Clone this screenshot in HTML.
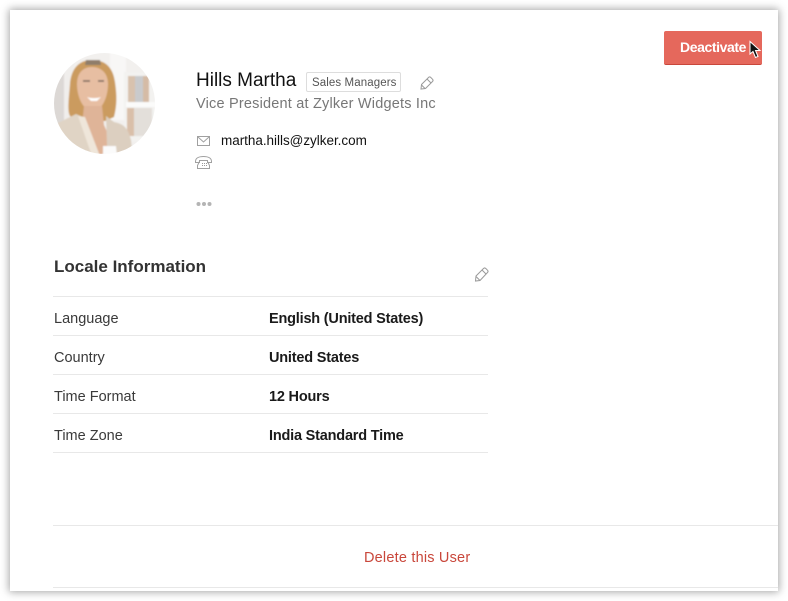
<!DOCTYPE html>
<html><head><meta charset="utf-8"><title>User</title>
<style>
html,body{margin:0;padding:0;background:#fff}
body{width:788px;height:601px;position:relative;overflow:hidden;font-family:"Liberation Sans",sans-serif;color:#111}
.card{position:absolute;left:10px;top:10px;width:768px;height:581px;background:#fff;box-shadow:0 0 8px 1px rgba(0,0,0,.36)}
.t{position:absolute;white-space:nowrap;line-height:20px}
.line{position:absolute;height:1px;background:#e8e8e8}
.lab{font-size:14.5px;color:#3a3a3a;left:54px}
.val{font-size:14.5px;font-weight:bold;color:#1a1a1a;left:269px;letter-spacing:-.2px}
svg{position:absolute;overflow:visible}
</style></head><body>
<div class="card"></div>

<svg style="left:0;top:0" width="788" height="601" viewBox="0 0 788 601">
<defs>
<clipPath id="c"><circle cx="104.500" cy="103.500" r="50.500"/></clipPath>
<filter id="b" x="-10%" y="-10%" width="120%" height="120%"><feGaussianBlur stdDeviation="0.9"/></filter>
</defs>
<g clip-path="url(#c)"><g filter="url(#b)">
<rect x="50" y="50" width="110" height="110" fill="#f2f0ee"/>
<rect x="50" y="50" width="14" height="80" fill="#dcd8d5"/>
<rect x="64" y="50" width="10" height="80" fill="#f0eeec"/>
<rect x="110" y="50" width="16" height="70" fill="#f8f7f6"/>
<rect x="124" y="72" width="32" height="70" fill="#f3f2f0"/>
<rect x="128" y="76" width="7" height="26" fill="#d8c2ae"/>
<rect x="135" y="76" width="8" height="26" fill="#c9cacc"/>
<rect x="143" y="76" width="6" height="26" fill="#d5bba6"/>
<rect x="126" y="102" width="30" height="5" fill="#fbfbfa"/>
<rect x="127" y="108" width="7" height="28" fill="#d9bfa9"/>
<rect x="134" y="108" width="18" height="28" fill="#e3dfda"/>
<path d="M92 60C78 60 71 70 70 84C69 98 67 110 70 116L80 121L105 121L114 117C117 105 117 96 115 82C113 68 106 60 92 60Z" fill="#cb9b5e"/>
<path d="M86 60L100 60L101 65L85 65Z" fill="#8f7d6a"/>
<path d="M92 67C83 67 77 73 77 84C77 97 83 111 93 111C102 111 108 97 108 84C108 73 101 67 92 67Z" fill="#e7bea2"/>
<path d="M84 106L102 106L104 125L113 145L100 156L82 125Z" fill="#dfb498"/>
<path d="M83 81L90 81M98 81L104 81" stroke="#77655a" stroke-width="1.500"/>
<path d="M87 97C91 98.500 97 98.500 101 97L97 101L91 101Z" fill="#fff"/>
<path d="M54 125L76 114L85 118L100 158L60 158Z" fill="#e0d4c5"/>
<path d="M106 116L114 122C124 124 128 128 131 140L133 158L109 158L107 146Z" fill="#dccfc0"/>
<path d="M78 116L85 117L100 156L92 156Z" fill="#efe6da"/>
<path d="M103 146L116 146L117 156L103 156Z" fill="#fbfbfb"/>
</g></g>
<!-- edit pencils -->
<g fill="none" stroke="#9a9a9a" stroke-width="1">
<path d="M421.500 84.500L428.500 77.500C429.300 76.700 430 76.700 430.800 77.500L432.500 79.200C433.300 80 433.300 80.700 432.500 81.500L425.500 88.500L421 89Z"/>
<path d="M427 79L431 83M421.500 85L425 88.500"/>
<path d="M476 276L483.500 268.500C484.300 267.700 485 267.700 485.800 268.500L487.500 270.200C488.300 271 488.300 271.700 487.500 272.500L480 280.500L475.500 281Z"/>
<path d="M482 270L486 274M476 276.500L480 280.500"/>
</g>
<!-- mail -->
<g fill="none" stroke="#a0a0a0" stroke-width="1">
<rect x="197.500" y="136.500" width="12" height="9"/>
<path d="M198 137L203.500 142L209 137"/>
<!-- phone -->
<path d="M195.500 161.500C195.500 158 199 156.500 203.500 156.500C208 156.500 211.500 158 211.500 161.500L211.500 162.500L207.500 162.500L207.500 160.500L199.500 160.500L199.500 162.500L195.500 162.500Z"/>
<path d="M199.500 161.500L197.500 165.500L197.500 168.500L209.500 168.500L209.500 165.500L207.500 161.500"/>
</g>
<g fill="#999"><rect x="202" y="163" width="1" height="1"/><rect x="204" y="163" width="1" height="1"/><rect x="206" y="163" width="1" height="1"/><rect x="202" y="165" width="1" height="1"/><rect x="204" y="165" width="1" height="1"/><rect x="206" y="165" width="1" height="1"/></g>
<g fill="#b4b4b4"><circle cx="198.500" cy="204" r="2"/><circle cx="204" cy="204" r="2"/><circle cx="209.500" cy="204" r="2"/></g>
</svg>

<div style="position:absolute;left:664px;top:31px;width:98px;height:33px;background:#e5685c;border-bottom:1px solid #c9473b;border-radius:2px"></div>
<div class="t" style="left:680px;top:37px;font-size:14px;font-weight:bold;color:#fff;letter-spacing:-.4px">Deactivate</div>
<svg style="left:0;top:0" width="788" height="601" viewBox="0 0 788 601"><path d="M750 41.500L750 54L753 51.500L755.500 57.500L758 56.500L755.500 50.500L760 50.500Z" fill="#111" stroke="#fff" stroke-width="1"/></svg>

<div class="t" style="left:196px;top:71px;font-size:19px;color:#111">Hills Martha</div>
<div style="position:absolute;left:306px;top:72px;width:93px;height:18px;border:1px solid #ddd;border-radius:2px"></div>
<div class="t" style="left:312px;top:73px;font-size:11.500px;color:#555;letter-spacing:.1px">Sales Managers</div>
<div class="t" style="left:196px;top:94px;font-size:14.500px;color:#777;letter-spacing:.2px">Vice President at Zylker Widgets Inc</div>
<div class="t" style="left:221px;top:131px;font-size:13.500px;color:#111;letter-spacing:-.03px">martha.hills@zylker.com</div>

<div class="t" style="left:54px;top:257px;font-size:17px;font-weight:bold;color:#333">Locale Information</div>
<div class="line" style="left:53px;top:296px;width:435px"></div>
<div class="t lab" style="top:309px">Language</div><div class="t val" style="top:309px">English (United States)</div>
<div class="line" style="left:53px;top:335px;width:435px"></div>
<div class="t lab" style="top:348px">Country</div><div class="t val" style="top:348px">United States</div>
<div class="line" style="left:53px;top:374px;width:435px"></div>
<div class="t lab" style="top:387px">Time Format</div><div class="t val" style="top:387px">12 Hours</div>
<div class="line" style="left:53px;top:413px;width:435px"></div>
<div class="t lab" style="top:426px">Time Zone</div><div class="t val" style="top:426px">India Standard Time</div>
<div class="line" style="left:53px;top:452px;width:435px"></div>

<div class="line" style="left:53px;top:525px;width:725px"></div>
<div class="t" style="left:364px;top:548px;font-size:14.500px;color:#c9473b;letter-spacing:.2px">Delete this User</div>
<div class="line" style="left:53px;top:587px;width:725px"></div>
</body></html>
